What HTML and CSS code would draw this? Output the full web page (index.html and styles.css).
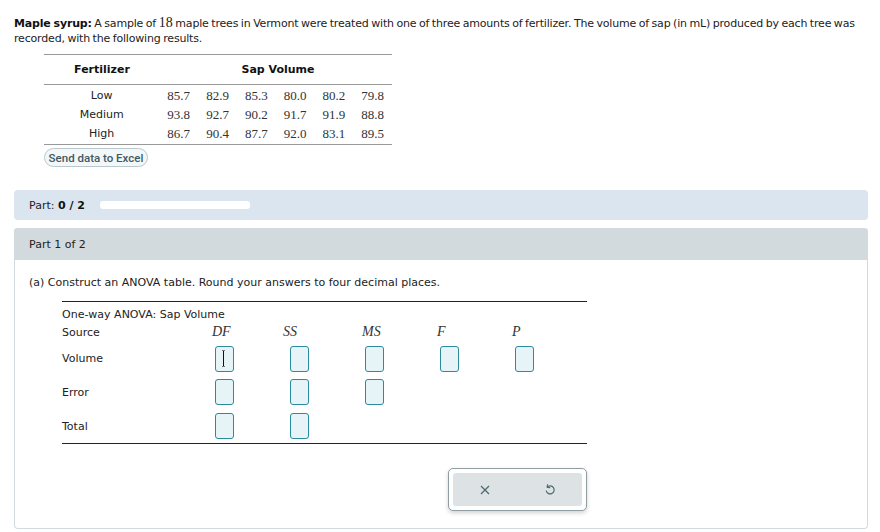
FILE: index.html
```html
<!DOCTYPE html>
<html>
<head>
<meta charset="utf-8">
<link rel="stylesheet" href="styles.css">
</head>
<body>
<div class="page">
  <p class="intro"><b>Maple syrup:</b> A sample of <span class="num">18</span> maple trees in Vermont were treated with one of three amounts of fertilizer. The volume of sap (in mL) produced by each tree was recorded, with the following results.</p>

  <div class="data">
    <div class="drow head">
      <div class="dlabel">Fertilizer</div>
      <div class="dtitle">Sap Volume</div>
    </div>
    <div class="dbody">
      <div class="drow"><div class="dlabel">Low</div><div class="v">85.7</div><div class="v">82.9</div><div class="v">85.3</div><div class="v">80.0</div><div class="v">80.2</div><div class="v">79.8</div></div>
      <div class="drow"><div class="dlabel">Medium</div><div class="v">93.8</div><div class="v">92.7</div><div class="v">90.2</div><div class="v">91.7</div><div class="v">91.9</div><div class="v">88.8</div></div>
      <div class="drow"><div class="dlabel">High</div><div class="v">86.7</div><div class="v">90.4</div><div class="v">87.7</div><div class="v">92.0</div><div class="v">83.1</div><div class="v">89.5</div></div>
    </div>
  </div>
  <button class="excel">Send data to Excel</button>

  <div class="partbar">
    <span>Part: <b>0 / 2</b></span>
    <div class="progress"></div>
  </div>

  <div class="panel">
    <div class="panel-head">Part 1 of 2</div>
    <div class="panel-body">
      <p class="q">(a) Construct an ANOVA table. Round your answers to four decimal places.</p>
      <div class="anova">
        <div class="atitle">One-way ANOVA: Sap Volume</div>
        <div class="agrid">
          <div class="src">Source</div>
          <div class="h">DF</div><div class="h hs">SS</div><div class="h">MS</div><div class="h">F</div><div class="h">P</div>

          <div class="lbl">Volume</div>
          <div class="cell"><span class="box"><span class="caret"></span></span></div>
          <div class="cell"><span class="box"></span></div>
          <div class="cell"><span class="box"></span></div>
          <div class="cell"><span class="box"></span></div>
          <div class="cell"><span class="box"></span></div>

          <div class="lbl">Error</div>
          <div class="cell"><span class="box"></span></div>
          <div class="cell"><span class="box"></span></div>
          <div class="cell"><span class="box"></span></div>
          <div class="cell"></div>
          <div class="cell"></div>

          <div class="lbl">Total</div>
          <div class="cell"><span class="box"></span></div>
          <div class="cell"><span class="box"></span></div>
          <div class="cell"></div>
          <div class="cell"></div>
          <div class="cell"></div>
        </div>
      </div>
      <div class="actions">
        <div class="actions-inner">
          <span class="act">
            <svg width="10" height="10" viewBox="0 0 10 10"><path d="M1 1 L9 9 M9 1 L1 9" stroke="#4e6a72" stroke-width="1.3" fill="none"/></svg>
          </span>
          <span class="act">
            <svg width="12" height="13" viewBox="0 0 12 13"><path d="M3.2 4.2 A4 4 0 1 1 2.2 7.5" stroke="#4e6a72" stroke-width="1.2" fill="none"/><path d="M3.6 1.4 L3.2 4.4 L6.2 4.6" stroke="#4e6a72" stroke-width="1.2" fill="none" stroke-linejoin="round"/></svg>
          </span>
        </div>
      </div>
    </div>
  </div>
</div>
</body>
</html>
```

FILE: styles.css
```css
* { box-sizing: border-box; }
html, body { margin: 0; padding: 0; background: #fff; }
body {
  font-family: "DejaVu Sans", Verdana, sans-serif;
  font-size: 11px;
  color: #222;
}
.page { padding: 16px 12px 0 14px; width: 880px; }
.intro { margin: 0; line-height: 15px; letter-spacing: -0.18px; word-spacing: -0.7px; }
.intro b { color: #111; }
.num { font-family: "Liberation Serif", serif; font-size: 14px; letter-spacing: 0; line-height: 1; }

.data { margin: 8px 0 0 30px; width: 348px; border-top: 1px solid #999; border-bottom: 1px solid #999; }
.drow { display: flex; align-items: center; }
.drow.head { height: 30px; border-bottom: 1px solid #999; font-weight: bold; color: #111; }
.dbody { padding: 1px 0 1px; }
.dbody .drow { height: 19px; }
.dlabel { width: 116px; text-align: center; }
.dtitle { flex: 1; text-align: center; padding-left: 4px; }
.v { width: 39px; text-align: center; font-family: "Liberation Serif", serif; font-size: 13px; color: #333; }

.excel {
  display: block;
  margin: 3px 0 0 30px;
  height: 19px; width: 104px;
  padding: 0;
  border: 1px solid #b8c8ce; border-radius: 10px;
  background: #f4f7f8;
  font-family: Roboto, "DejaVu Sans", sans-serif;
  font-weight: 500;
  font-size: 11.5px; color: #3e5a64;
}

.partbar {
  margin-top: 23px;
  height: 30px;
  background: #dae5ef;
  border-radius: 4px;
  display: flex; align-items: center;
  padding-left: 15px;
  color: #222;
}
.partbar b { color: #111; }
.progress { margin-left: 15px; width: 150px; height: 8px; background: #fff; border-radius: 3px; }

.panel { margin-top: 8px; border: 1px solid #d3dadd; border-top: 0; border-radius: 4px; height: 301px; }
.panel-head { height: 32px; background: #d3dadd; border-radius: 4px 4px 0 0; display: flex; align-items: center; padding-left: 15px; margin: 0 -1px; }
.panel-body { padding: 15px 0 0 14px; }
.q { margin: 0; line-height: 15px; }

.anova { margin: 11px 0 0 33px; width: 525px; border-top: 1.5px solid #222; border-bottom: 1.5px solid #222; padding-top: 5px; }
.atitle { line-height: 15px; }
.agrid { display: grid; grid-template-columns: 150px 75px 75px 75px 75px 75px; grid-template-rows: 20px 33px 34px 34px; align-items: center; }
.src { line-height: 15px; }
.h { font-family: "Liberation Serif", serif; font-style: italic; font-size: 14px; color: #333; }
.hs { margin-left: -4px; }
.cell { height: 26px; padding-left: 3px; }
.box { display: block; width: 19px; height: 26px; border: 1.5px solid #2b8a9c; border-radius: 3px; background: #e6f4f8; position: relative; }
.caret { position: absolute; left: 7px; top: 3px; width: 1px; height: 17px; background: #111; }
.caret::before, .caret::after { content: ""; position: absolute; left: -1px; width: 3px; height: 1px; background: #777; }
.caret::before { top: 0; }
.caret::after { bottom: 0; }

.actions { margin: 24px 0 0 419px; width: 139px; height: 43px; border: 1px solid #8e9ea4; border-radius: 5px; padding: 4px; box-shadow: 0 2px 4px rgba(0,0,0,0.18); background: #fff; }
.actions-inner { height: 33px; background: #dde3e5; border-radius: 3px; display: flex; align-items: center; }
.act { flex: 1; display: flex; justify-content: center; align-items: center; }
```
